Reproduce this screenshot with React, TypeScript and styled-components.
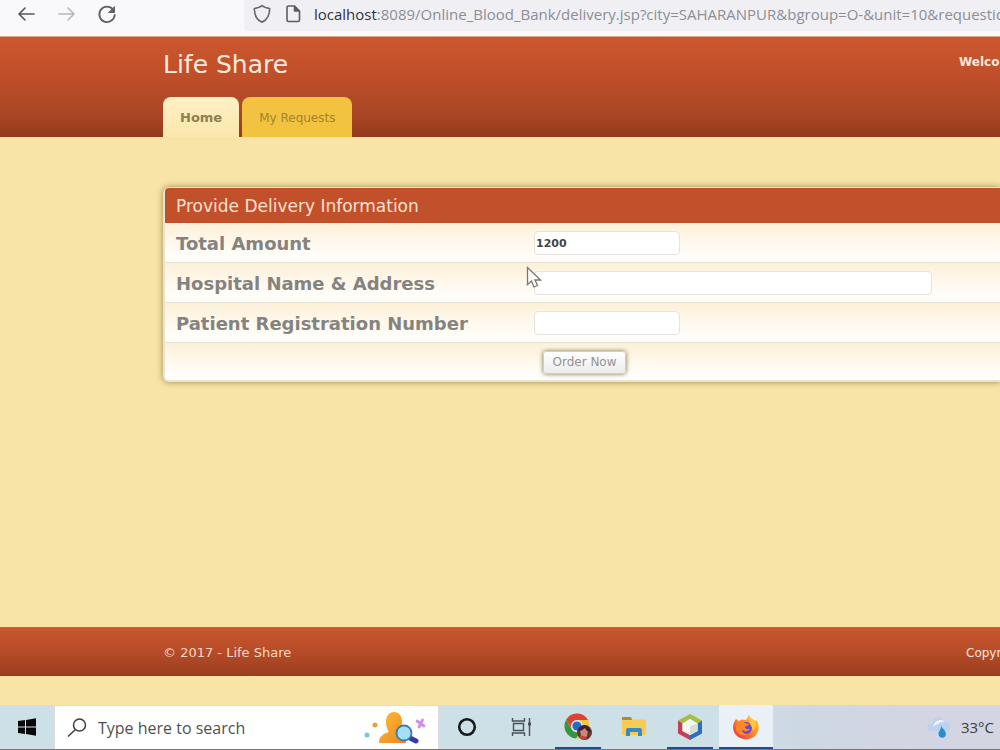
import React from "react";
import styled, { createGlobalStyle } from "styled-components";

const GlobalStyle = createGlobalStyle`
  *, *::before, *::after { box-sizing: border-box; }
  body { margin: 0; background: #f7e4a6; }
  button, input { font: inherit; }
`;

const web = `"DejaVu Sans", Verdana, sans-serif`;
const system = `"Open Sans", "Noto Sans", sans-serif`;

const Screen = styled.div`
  display: flex;
  flex-direction: column;
  min-height: 100vh;
  overflow: hidden;
  font-family: ${web};
`;

const BrowserBar = styled.div`
  display: flex;
  height: 37px;
  background: #f9f9fb;
  border-bottom: 1px solid #d9a491;
`;

const NavGroup = styled.div`
  display: flex;
  gap: 16px;
  width: 244px;
  padding: 2px 0 0 14px;
  flex: none;
`;

const NavButton = styled.button<{ $faded?: boolean }>`
  width: 24px;
  height: 24px;
  padding: 0;
  border: 0;
  background: none;
  opacity: ${(p) => (p.$faded ? 0.4 : 1)};
  svg { display: block; }
`;

const AddressBar = styled.div`
  display: flex;
  flex: 1;
  min-width: 0;
  gap: 12px;
  height: 31px;
  padding-left: 8px;
  background: #f0f0f4;
  border-radius: 0 0 0 4px;
  overflow: hidden;
  svg { flex: none; margin-top: 4px; }
`;

const Address = styled.div`
  font: 15px/28px ${system};
  color: #8d8d94;
  white-space: nowrap;
`;

const Host = styled.span`
  color: #303036;
`;

const Header = styled.header`
  display: flex;
  justify-content: space-between;
  height: 100px;
  padding-left: 163px;
  background: linear-gradient(#cb572f, #c1502a 35%, #a84524 80%, #923b1c);
`;

const Brand = styled.div`
  display: flex;
  flex-direction: column;
  justify-content: space-between;
`;

const SiteTitle = styled.h1`
  margin: 0;
  padding-top: 12px;
  font-size: 25px;
  line-height: 32px;
  font-weight: 400;
  color: #fde9dc;
`;

const Tabs = styled.nav`
  display: flex;
  gap: 3px;
`;

const Tab = styled.a<{ $active?: boolean }>`
  padding: 0 17px;
  height: 40px;
  border-radius: 8px 8px 0 0;
  font-size: ${(p) => (p.$active ? 13 : 12)}px;
  line-height: 42px;
  text-decoration: none;
  font-weight: ${(p) => (p.$active ? 700 : 400)};
  color: ${(p) => (p.$active ? "#8f804c" : "#a5842a")};
  background: ${(p) => (p.$active ? "linear-gradient(#fff0c6, #fae7ac)" : "#f1c340")};
`;

const EdgeText = styled.div<{ $width: number; $bold?: boolean }>`
  width: ${(p) => p.$width}px;
  overflow: hidden;
  white-space: nowrap;
  font-size: 12px;
  line-height: 50px;
  font-weight: ${(p) => (p.$bold ? 700 : 400)};
  color: #fde9dc;
`;

const Main = styled.main`
  flex: 1;
  padding: 50px 0 32px 163px;
`;

const Panel = styled.form`
  border: 1px solid #e8e3d2;
  border-width: 1px 0 2px 2px;
  border-radius: 6px 0 0 6px;
  background: #fffdf8;
  box-shadow: 0 0 6px rgba(90, 75, 20, 0.6);
`;

const PanelTitle = styled.h2`
  margin: 0;
  padding-left: 11px;
  height: 35px;
  border-radius: 4px 0 0 0;
  font-size: 17px;
  line-height: 36px;
  font-weight: 400;
  color: #fde0cf;
  background: #c1502b;
`;

const Row = styled.div`
  display: grid;
  grid-template-columns: 358px 1fr;
  align-items: center;
  height: 40px;
  padding: 1px 0 0 11px;
  background: linear-gradient(#fdf0d8, #fffdf8 80%);
  border-bottom: 1px solid #e6e0d6;
  &:last-child { height: 37px; border-bottom: 0; border-radius: 0 0 0 4px; }
`;

const Label = styled.label`
  font-size: 18px;
  font-weight: 700;
  color: #85837f;
`;

const Field = styled.input<{ $wide?: boolean }>`
  width: ${(p) => (p.$wide ? 398 : 146)}px;
  height: 24px;
  padding: 0 1px;
  border: 1px solid #e5e2df;
  border-radius: 4px;
  background: #fff;
  font-size: 11px;
  font-weight: 700;
  color: #454545;
  outline: 0;
`;

const OrderButton = styled.button`
  grid-column: 2;
  justify-self: start;
  margin-left: 9px;
  width: 83px;
  height: 23px;
  padding: 0;
  border: 1px solid #d5d0bc;
  border-radius: 3px;
  background: linear-gradient(#ffffff, #ececec);
  box-shadow: 0 0 4px rgba(90, 80, 30, 0.8);
  font-size: 12px;
  color: #929292;
`;

const Footer = styled.footer`
  display: flex;
  justify-content: space-between;
  height: 49px;
  margin-bottom: 29px;
  padding-left: 163px;
  border-top: 1px solid #b8693c;
  background: linear-gradient(#c9562f, #b94d29 45%, #9a3d1e);
`;

const Notice = styled.div`
  font-size: 13px;
  line-height: 50px;
  color: #fbd8c5;
`;

const Taskbar = styled.div`
  display: flex;
  height: 45px;
  background: linear-gradient(90deg, #cde0e8 0 72%, #cdd8e4 80%, #d3d5e2 92%);
  border-bottom: 1px solid #777;
`;

const TaskButton = styled.button<{ $width: number; $running?: boolean; $active?: boolean }>`
  display: grid;
  place-items: center;
  flex: none;
  width: ${(p) => p.$width}px;
  padding: 0;
  border: 0;
  box-shadow: ${(p) => (p.$running ? "inset 0 -2px #1c4d98" : "none")};
  background: ${(p) => (p.$active ? "#eaf1f6" : "none")};
  svg { display: block; }
`;

const Search = styled.label`
  display: flex;
  align-items: center;
  flex: none;
  width: 385px;
  padding: 0 12px;
  gap: 11px;
  background: #fff;
  border: 1px solid #dcdcdc;
  border-bottom: 0;
`;

const SearchInput = styled.input`
  flex: 1;
  min-width: 0;
  padding: 0;
  border: 0;
  outline: 0;
  background: none;
  font: 16px/24px ${system};
  &::placeholder { color: #505050; opacity: 1; }
`;

const Apps = styled.div`
  display: flex;
  gap: 10px;
  padding: 0 6px;
`;

const Weather = styled.div`
  display: flex;
  align-items: center;
  gap: 9px;
  margin-left: auto;
  padding-right: 6px;
  font: 15px/24px ${system};
  color: #3a3c44;
`;

const Pointer = styled.svg`
  position: absolute;
  left: 526px;
  top: 266px;
  pointer-events: none;
`;

const BackIcon = () => (
  <svg width="24" height="24" fill="none" stroke="#55555c" strokeWidth="1.6" strokeLinecap="round" strokeLinejoin="round">
    <path d="M20 12H5M11 6l-6 6 6 6" />
  </svg>
);
const ForwardIcon = () => (
  <svg width="24" height="24" fill="none" stroke="#55555c" strokeWidth="1.6" strokeLinecap="round" strokeLinejoin="round">
    <path d="M5 12h15M14 6l6 6-6 6" />
  </svg>
);
const ReloadIcon = () => (
  <svg width="26" height="24" fill="none" stroke="#606066" strokeWidth="1.8" strokeLinecap="round">
    <path d="M19 7.500a7.700 7.700 0 1 0 1.700 5.500" />
    <path d="M20.500 5v5.500h-5.500z" fill="#606066" strokeWidth="1" />
  </svg>
);
const ShieldIcon = () => (
  <svg width="20" height="21" fill="none" stroke="#66666c" strokeWidth="1.6" strokeLinejoin="round">
    <path d="M10 1.500C8 3.500 5 4.200 2.300 4.500C2.300 11 4 15.500 10 18.300C16 15.500 17.700 11 17.700 4.500C15 4.200 12 3.500 10 1.500Z" />
  </svg>
);
const PageIcon = () => (
  <svg width="18" height="20" fill="none" stroke="#5c5c62" strokeWidth="1.600" strokeLinejoin="round">
    <path d="M4.500 2h6l5 5v9q0 1.500-1.500 1.500h-9.500q-1.500 0-1.500-1.500v-12.500q0-1.500 1.500-1.500Z" />
    <path d="M10.500 2.500v4.500h4.500z" fill="#5c5c62" />
  </svg>
);
const WindowsIcon = () => (
  <svg width="20" height="20" fill="#080808">
    <path d="M1 4l7-1v6.500H1zM9 2.900L19 1.300v8.200H9zM1 10.500h7V17l-7-1zM9 10.500h10v8.200L9 17.100z" />
  </svg>
);
const SearchIcon = () => (
  <svg width="20" height="22" fill="none" stroke="#3f3f3f" strokeWidth="1.500">
    <circle cx="12.500" cy="8" r="6" />
    <path d="M8.500 12.500L1 19.500" />
  </svg>
);
const SearchArt = () => (
  <svg width="64" height="36" viewBox="0 0 64 36">
    <defs>
      <linearGradient id="person" x1="0" y1="0" x2="1" y2="1">
        <stop offset="0" stopColor="#ffbd35" />
        <stop offset="1" stopColor="#ee8520" />
      </linearGradient>
    </defs>
    <circle cx="5" cy="25" r="2.500" fill="#75cbd5" />
    <circle cx="13" cy="15" r="2.500" fill="#dda53a" />
    <path d="M17 33c0-7 4-9 10-11-2-3-3-6-3-10 0-6 3-10 8-10s8 4 8 10c0 4-1 7-3 10 4 2 7 4 7 11z" fill="url(#person)" />
    <path d="M48 28l6 3" stroke="#3537b7" strokeWidth="5" strokeLinecap="round" />
    <circle cx="42" cy="23" r="7.500" fill="#a6def5" stroke="#377daf" strokeWidth="1.800" />
    <path d="M55 11l7 5M60.500 10l-3.500 7" stroke="#d08fe4" strokeWidth="2.800" strokeLinecap="round" />
  </svg>
);
const CortanaIcon = () => (
  <svg width="22" height="22" fill="none" stroke="#16191c" strokeWidth="2.600">
    <circle cx="11" cy="11" r="7.800" />
  </svg>
);
const TaskViewIcon = () => (
  <svg width="24" height="22" fill="none" stroke="#4b5056" strokeWidth="1.400">
    <path d="M2.500 2v3h12V2M2.500 20v-3h12v3M3.500 7.500h10v7h-10zM19.500 2v18" />
    <path d="M18 8h3" strokeWidth="3" />
  </svg>
);
const ChromeIcon = () => (
  <svg width="30" height="30" viewBox="0 0 30 30">
    <circle cx="14" cy="14" r="12.500" fill="#f3c338" />
    <path d="M3.200 7.700A12.500 12.500 0 0 1 25 8H14a6 6 0 0 0-5.500 8z" fill="#df4132" />
    <path d="M3.200 7.700A12.500 12.500 0 0 0 13 26.500l4-7A6 6 0 0 1 8.500 17z" fill="#31964a" />
    <circle cx="14" cy="14" r="6" fill="#e6eef8" />
    <circle cx="14" cy="14" r="4.600" fill="#2768cc" />
    <circle cx="21.500" cy="20.500" r="7.500" fill="#67342e" />
    <path d="M17 18c2-3 6-3 8 0l-1 6-3 3-3-3z" fill="#c98a7b" />
    <path d="M15.500 19c0-6 8-8 11-3l1 4c-3 0-5-3-6-4-1 2-4 3-6 3z" fill="#3b2030" />
    <path d="M16 25q4-3 8 1l-4 2z" fill="#c5453b" />
  </svg>
);
const FolderIcon = () => (
  <svg width="26" height="22" viewBox="0 0 26 22">
    <path d="M1 2q0-1 1-1h8l2 2.500h12q1 0 1 1V19H1z" fill="#f8cc54" />
    <path d="M1 2q0-1 1-1h8l1 3H1z" fill="#b98c23" />
    <path d="M5 20v-6q0-2 2-2h12q2 0 2 2v6h-4v-4H9v4z" fill="#368bc5" />
  </svg>
);
const CubeIcon = () => (
  <svg width="28" height="30" viewBox="0 0 28 30">
    <path d="M14 2l12 6.500-4.500 3L14 7l-7.500 4.500L2 8.500z" fill="#a8bd43" />
    <path d="M2 8.500l4.500 3V19l7.500 4v5L2 21.500z" fill="#c33e58" />
    <path d="M26 8.500l-4.500 3V19L14 23v5l12-6.500z" fill="#2c70bc" />
    <path d="M14 7l7.500 4.500V19L14 23l-7.500-4v-7.500z" fill="#f5f7f1" />
    <path d="M14 14l7.500-2.500V19L14 23z" fill="#d7ddda" />
  </svg>
);
const FirefoxIcon = () => (
  <svg width="28" height="28" viewBox="0 0 28 28">
    <defs>
      <linearGradient id="fox" x1="1" y1="0" x2="0" y2="1">
        <stop offset="0" stopColor="#ffdc3b" />
        <stop offset="0.450" stopColor="#ff8b27" />
        <stop offset="1" stopColor="#ef254b" />
      </linearGradient>
    </defs>
    <path d="M4 6l2.500 2L10 6.500l4 .5 3-5c1 3 4 4 6 6l1.500-1c4 6 2 12-1 15.500-5 5-14 5-19 0C0 18 0 11 4 6z" fill="url(#fox)" />
    <circle cx="14" cy="15" r="6" fill="#7545c8" />
    <path d="M5 9c3-2 6-1 8 1l4 1c0 2-4 1.500-4 3.500 1 2 3 2 5 1-1 3-5 4-8 1 0 3 3 5 6 4.500-5 3-11 0-12-5z" fill="#ff8a25" />
    <path d="M17 2c1 3 4 5 6 7 2 4 0 7-2 9 0-5-6-8-4-16z" fill="#ffc935" />
  </svg>
);
const WeatherIcon = () => (
  <svg width="26" height="24" viewBox="0 0 26 24">
    <path d="M6 16c-7 0-6-8 0-8 1-7 11-8 13-1 8 0 7 9 1 9z" fill="#bdd1ef" />
    <path d="M7 11c2-6 9-8 12-4-5-1-7 3-12 4z" fill="#eef5fd" />
    <path d="M15 11c3 4 6 6 4.500 10-2 3-7 2-7-2 0-3 2.500-4 2.500-8z" fill="#278ed2" />
  </svg>
);

export default function App() {
  return (
    <Screen>
      <GlobalStyle />
      <BrowserBar>
        <NavGroup>
          <NavButton aria-label="Back"><BackIcon /></NavButton>
          <NavButton aria-label="Forward" $faded><ForwardIcon /></NavButton>
          <NavButton aria-label="Reload"><ReloadIcon /></NavButton>
        </NavGroup>
        <AddressBar>
          <ShieldIcon />
          <PageIcon />
          <Address>
            <Host>localhost</Host>:8089/Online_Blood_Bank/delivery.jsp?city=SAHARANPUR&amp;bgroup=O-&amp;unit=10&amp;requestid
          </Address>
        </AddressBar>
      </BrowserBar>
      <Header>
        <Brand>
          <SiteTitle>Life Share</SiteTitle>
          <Tabs>
            <Tab href="#home" $active>Home</Tab>
            <Tab href="#requests">My Requests</Tab>
          </Tabs>
        </Brand>
        <EdgeText $width={41} $bold>Welcome</EdgeText>
      </Header>
      <Main>
        <Panel onSubmit={(e) => e.preventDefault()}>
          <PanelTitle>Provide Delivery Information</PanelTitle>
          <Row>
            <Label htmlFor="amount">Total Amount</Label>
            <Field id="amount" defaultValue="1200" />
          </Row>
          <Row>
            <Label htmlFor="hospital">Hospital Name &amp; Address</Label>
            <Field id="hospital" $wide />
          </Row>
          <Row>
            <Label htmlFor="patient">Patient Registration Number</Label>
            <Field id="patient" />
          </Row>
          <Row>
            <OrderButton type="submit">Order Now</OrderButton>
          </Row>
        </Panel>
      </Main>
      <Footer>
        <Notice>© 2017 - Life Share</Notice>
        <EdgeText $width={34}>Copyright</EdgeText>
      </Footer>
      <Taskbar>
        <TaskButton $width={54} aria-label="Start"><WindowsIcon /></TaskButton>
        <Search>
          <SearchIcon />
          <SearchInput placeholder="Type here to search" aria-label="Search" />
          <SearchArt />
        </Search>
        <Apps>
          <TaskButton $width={44} aria-label="Cortana"><CortanaIcon /></TaskButton>
          <TaskButton $width={46} aria-label="Task view"><TaskViewIcon /></TaskButton>
          <TaskButton $width={46} $running aria-label="Chrome"><ChromeIcon /></TaskButton>
          <TaskButton $width={46} aria-label="File Explorer"><FolderIcon /></TaskButton>
          <TaskButton $width={46} $running aria-label="NetBeans"><CubeIcon /></TaskButton>
        </Apps>
        <TaskButton $width={54} $running $active aria-label="Firefox"><FirefoxIcon /></TaskButton>
        <Weather><WeatherIcon />33°C</Weather>
      </Taskbar>
      <Pointer width="18" height="24" fill="#fffdf6" stroke="#777" strokeWidth="1.300">
        <path d="M1.500 1.500v17l4-3.500 2.500 6 3.500-1.500-2.500-5.500h5.500z" />
      </Pointer>
    </Screen>
  );
}
